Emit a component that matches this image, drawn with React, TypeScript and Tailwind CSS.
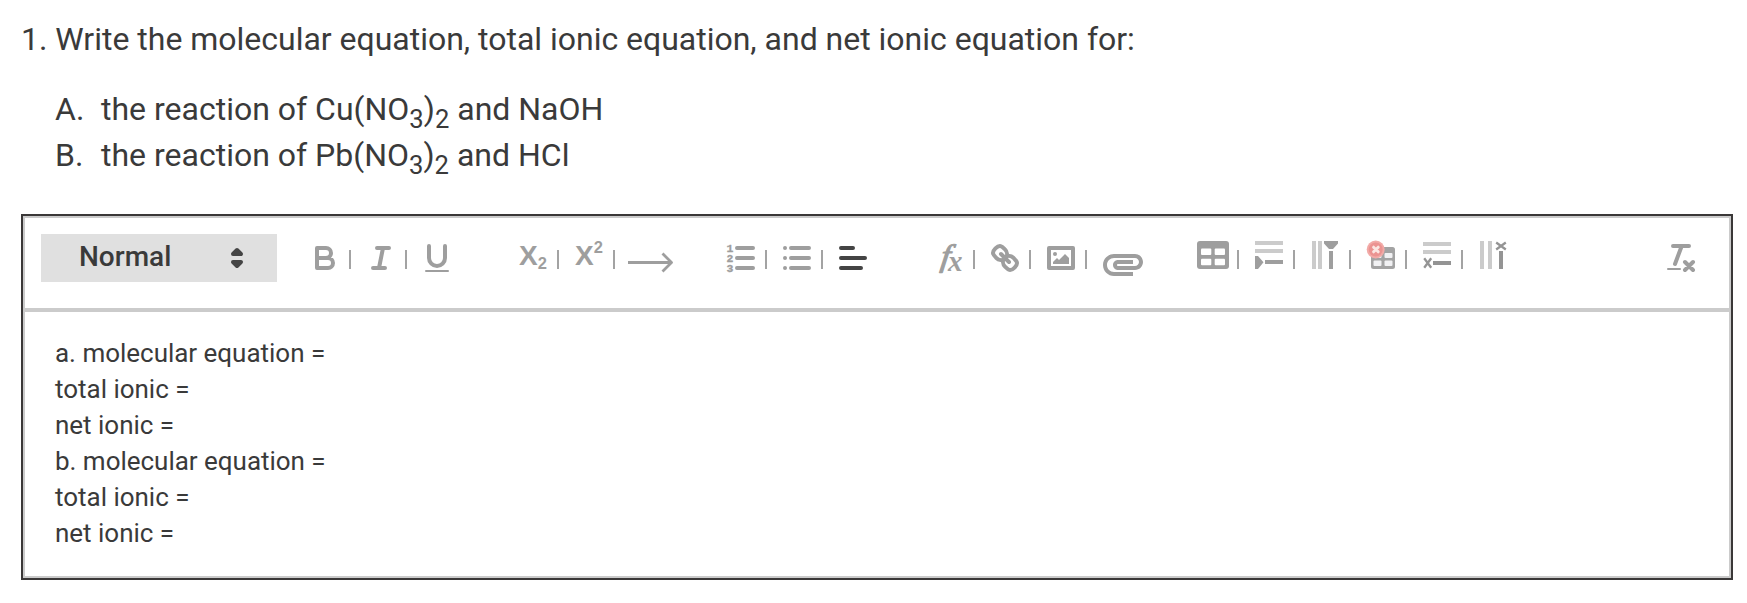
import type { ReactNode } from "react";

const GREY = "#9e9e9e";
const LIGHT = "#cbcbcb";
const SANS = "'Liberation Sans', Arial, sans-serif";

function Tool({ label, children, sep = true }: { label: string; children: ReactNode; sep?: boolean }) {
  return (
    <div className="flex h-9 w-14 shrink-0 items-start">
      <button type="button" aria-label={label} className="block h-9 w-9 shrink-0">
        <svg
          width="36"
          height="36"
          viewBox="0 0 36 36"
          className="block overflow-visible"
          fill="none"
          stroke={GREY}
          strokeWidth="4"
          strokeLinecap="round"
          strokeLinejoin="round"
        >
          {children}
        </svg>
      </button>
      {sep && <span className="mt-2.5 ml-1.5 h-[19px] w-[2px] shrink-0 bg-[#a3a3a3]" />}
    </div>
  );
}

function Group({ children }: { children: ReactNode }) {
  return <div className="flex shrink-0">{children}</div>;
}

function Reaction({ mark, metal, other }: { mark: string; metal: string; other: string }) {
  return (
    <li className="flex h-[46px] whitespace-nowrap">
      <span className="w-[46px] shrink-0">{mark}</span>
      <span>
        the reaction of {metal}(NO
        <sub className="relative bottom-[-8px] align-baseline text-[25.6px] leading-none">3</sub>)
        <sub className="relative bottom-[-8px] align-baseline text-[25.6px] leading-none">2</sub> and {other}
      </span>
    </li>
  );
}

const ANSWER = [
  "a. molecular equation =",
  "total ionic =",
  "net ionic =",
  "b. molecular equation =",
  "total ionic =",
  "net ionic =",
];

export default function App() {
  return (
    <div className="h-[603px] w-[1747px] overflow-hidden bg-white pl-[21px] font-[Roboto,sans-serif] text-[#3a3a3a]">
      <p className="h-[86px] pt-4 text-[32px] leading-[46px] tracking-[-0.012px] whitespace-nowrap">
        1. Write the molecular equation, total ionic equation, and net ionic equation for:
      </p>
      <ol className="h-[128px] pl-[34px] text-[32px] leading-[46px]">
        <Reaction mark="A." metal="Cu" other="NaOH" />
        <Reaction mark="B." metal="Pb" other="HCl" />
      </ol>

      <section className="h-[366px] w-[1712px] border-2 border-[#3a3838]">
        <div className="h-full border-2 border-[#cbcbcb]">
          <div className="flex h-[94px] items-start border-b-4 border-[#cbcbcb] pt-[16px] pl-4">
            <button
              type="button"
              className="flex h-12 w-[236px] shrink-0 items-center justify-between bg-[#e0e0e0] pr-[22px] pl-[38px] text-[28px] font-medium"
            >
              <span className="pb-0.5 leading-[44px]">Normal</span>
              <svg width="36" height="36" viewBox="0 0 18 18" fill="#444" stroke="#444" strokeWidth="2" strokeLinejoin="round">
                <polygon points="7 11 9 13 11 11" />
                <polygon points="7 7 9 5 11 7" />
              </svg>
            </button>

            <div className="flex gap-10 pt-1.5 pl-[30px]">
              <Group>
                <Tool label="Bold">
                  <path d="M10 8h9a5 5 0 0 1 0 10h-9zM10 18h11a5 5 0 0 1 0 10H10z" />
                </Tool>
                <Tool label="Italic">
                  <path d="M14 8h12M10 28h12M20 8l-4 20" />
                </Tool>
                <Tool label="Underline" sep={false}>
                  <path d="M10 6v12a8 8 0 0 0 8 8a8 8 0 0 0 8-8V6" />
                  <rect x="6" y="30" width="24" height="2" rx="1" fill={GREY} stroke="none" />
                </Tool>
              </Group>

              <Group>
                <Tool label="Subscript">
                  <g fill={GREY} stroke="none" fontFamily={SANS} fontWeight="bold">
                    <text x="4" y="25" fontSize="28">X</text>
                    <text x="22.7" y="29" fontSize="16.5">2</text>
                  </g>
                </Tool>
                <Tool label="Superscript">
                  <g fill={GREY} stroke="none" fontFamily={SANS} fontWeight="bold">
                    <text x="4" y="25" fontSize="28">X</text>
                    <text x="22.7" y="13" fontSize="16.5">2</text>
                  </g>
                </Tool>
                <Tool label="Arrow" sep={false}>
                  <path d="M1 22.5h44M35.5 13.5l9 9l-9 9" strokeWidth="2.8" strokeLinecap="butt" strokeLinejoin="round" />
                </Tool>
              </Group>

              <Group>
                <Tool label="Numbered list">
                  <path d="M14 8h16M14 18h16M14 28h16" />
                  <g fill={GREY} strokeWidth="0.3" fontFamily="'Liberation Mono', monospace" fontWeight="bold" fontSize="11.5">
                    <text x="3.4" y="11.8">1</text>
                    <text x="3.4" y="21.8">2</text>
                    <text x="3.4" y="31.8">3</text>
                  </g>
                </Tool>
                <Tool label="Bulleted list">
                  <path d="M12 8h18M12 18h18M12 28h18M6 8h.01M6 18h.01M6 28h.01" />
                </Tool>
                <Tool label="Align" sep={false}>
                  <path d="M6 8h12M6 18h24M6 28h20" stroke="#444" />
                </Tool>
              </Group>

              <Group>
                <Tool label="Formula">
                  <g fill={GREY} fontFamily="'Liberation Serif', serif" fontStyle="italic">
                    <text transform="translate(9 25.6) scale(1.08 1) skewX(-7)" fontSize="31" strokeWidth="1.1">f</text>
                    <text x="17" y="31" fontSize="29" fontWeight="bold" stroke="none">x</text>
                  </g>
                </Tool>
                <Tool label="Link">
                  <g transform="scale(2)" strokeWidth="2">
                    <path d="M7 7l4 4" />
                    <path d="M8.9,4.577a3.476,3.476,0,0,1,.36,4.679A3.476,3.476,0,0,1,4.577,8.9C3.185,7.5,2.035,6.4,4.217,4.217S7.5,3.185,8.9,4.577Z" />
                    <path d="M13.423,9.1a3.476,3.476,0,0,0-4.679-.36,3.476,3.476,0,0,0,.36,4.679c1.392,1.392,2.5,2.542,4.679.36S14.815,10.5,13.423,9.1Z" />
                  </g>
                </Tool>
                <Tool label="Image">
                  <rect x="6" y="8" width="24" height="20" />
                  <g fill={GREY} stroke="none">
                    <circle cx="12" cy="14" r="2" />
                    <polygon points="10 24 10 22 14 18 16 20 22 14 26 18 26 24" />
                  </g>
                </Tool>
                <Tool label="Attachment" sep={false}>
                  <path
                    transform="scale(2)"
                    fill={GREY}
                    stroke="none"
                    d="M2 12.5C2 9.46 4.46 7 7.5 7H18c2.21 0 4 1.79 4 4s-1.79 4-4 4H9.5C8.12 15 7 13.88 7 12.5S8.12 10 9.5 10H17v2H9.41c-.55 0-.55 1 0 1H18c1.1 0 2-.9 2-2s-.9-2-2-2H7.5C5.57 9 4 10.57 4 12.5S5.57 16 7.5 16H17v2H7.5C4.46 18 2 15.54 2 12.5z"
                  />
                </Tool>
              </Group>

              <Group>
                <Tool label="Insert table">
                  <g stroke="none">
                    <rect x="2" y="1" width="32" height="28" rx="3" fill={GREY} />
                    <g fill="#fff">
                      <rect x="6" y="8.4" width="10.3" height="6.6" rx="1" />
                      <rect x="19.7" y="8.4" width="10.3" height="6.6" rx="1" />
                      <rect x="6" y="18.7" width="10.3" height="6.6" rx="1" />
                      <rect x="19.7" y="18.7" width="10.3" height="6.6" rx="1" />
                    </g>
                  </g>
                </Tool>
                <Tool label="Insert row">
                  <g stroke="none">
                    <path d="M4 1h28v4H4zM4 9h28v4H4z" fill={LIGHT} />
                    <path d="M4 16h3l5.5 6.2L7 29H4zM14 20h18v4H14z" fill={GREY} />
                  </g>
                </Tool>
                <Tool label="Insert column">
                  <g stroke="none">
                    <path d="M5 1h4v28H5zM11 1h4v28h-4z" fill={LIGHT} />
                    <path d="M17 1h14v2.5L26 9h-4l-5-5.5zM22 11h4v18h-4z" fill={GREY} />
                  </g>
                </Tool>
                <Tool label="Delete table">
                  <g stroke="none">
                    <rect x="8" y="7" width="24" height="22" rx="2.5" fill="#a3a3a3" />
                    <g fill="#f1f1f3">
                      <rect x="10.5" y="13" width="8" height="5" rx="1" />
                      <rect x="21.5" y="13" width="8" height="5" rx="1" />
                      <rect x="10.5" y="20.5" width="8" height="5.5" rx="1" />
                      <rect x="21.5" y="20.5" width="8" height="5.5" rx="1" />
                    </g>
                    <circle cx="12.7" cy="9.5" r="9" fill="#f2aaa7" />
                    <circle cx="12.7" cy="9.5" r="7" fill="#eb9391" />
                  </g>
                  <path d="M10.6 7.2l4.6 4.6M15.2 7.2l-4.6 4.6" stroke="#fbe6e2" strokeWidth="3" />
                </Tool>
                <Tool label="Delete row">
                  <path d="M4 2h28v4H4zM4 10h28v4H4z" fill={LIGHT} stroke="none" />
                  <path d="M14 21h18v4H14z" fill="#949494" stroke="none" />
                  <path d="M5.2 18.2l7 9.6M12.2 18.2l-7 9.6" stroke="#949494" strokeWidth="2.3" strokeLinecap="butt" />
                </Tool>
                <Tool label="Delete column" sep={false}>
                  <path d="M5 1h4v28H5zM13 1h4v28h-4z" fill={LIGHT} stroke="none" />
                  <path d="M24 11h4v18h-4z" fill="#949494" stroke="none" />
                  <path d="M21.2 2.5l9.6 7M30.8 2.5l-9.6 7" stroke="#949494" strokeWidth="2.3" strokeLinecap="butt" />
                </Tool>
              </Group>
            </div>

            <div className="pt-1.5 pl-[132px]">
              <Tool label="Clear formatting" sep={false}>
                <path d="M10 6h16M12 24l6.7-18M22 22l8 8M30 22l-8 8" />
                <rect x="4" y="28" width="14" height="2" rx="1" fill={GREY} stroke="none" />
              </Tool>
            </div>
          </div>

          <div className="pt-[23px] pl-[30px] text-[26px] leading-9 tracking-[-0.02px]">
            {ANSWER.map((line, i) => (
              <p key={i}>{line}</p>
            ))}
          </div>
        </div>
      </section>
    </div>
  );
}
